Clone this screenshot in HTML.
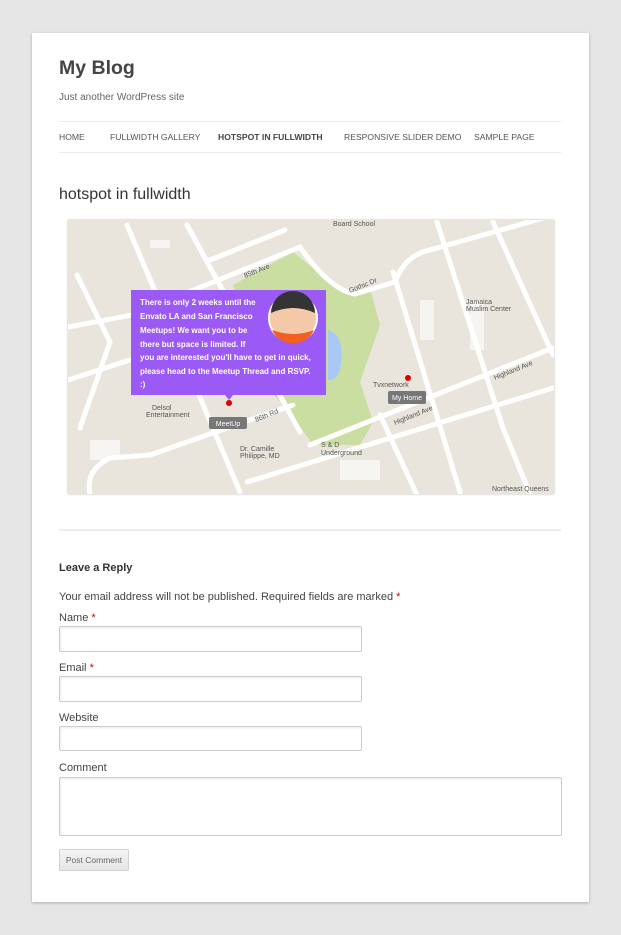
<!DOCTYPE html>
<html><head><meta charset="utf-8"><style>
*{margin:0;padding:0;box-sizing:border-box}
body{width:621px;height:935px;background:#e6e6e6;font-family:"Liberation Sans",sans-serif;color:#444;position:relative;overflow:hidden}
.page{position:absolute;left:32px;top:33px;width:557px;height:869px;background:#fff;box-shadow:0 1px 3px rgba(0,0,0,.25)}
.a{position:absolute;white-space:nowrap}
.line{position:absolute;left:59px;width:502px;height:2px;background:#ededed}
.inp{position:absolute;left:59px;width:303px;height:26px;border:1px solid #ccc;border-radius:2px;box-shadow:inset 1px 1px 2px rgba(0,0,0,.08)}
.lbl{font-size:11px;color:#444}
.r{color:#d00}
</style></head><body>
<div class="page"></div>
<div class="a" style="left:59px;top:57px;font-size:19.5px;font-weight:bold;color:#444">My Blog</div>
<div class="a" style="left:59px;top:92px;font-size:10px;color:#666">Just another WordPress site</div>
<div class="line" style="top:121px;height:1px"></div>
<div class="line" style="top:152px;height:1px"></div>
<div class="a" style="top:132px;left:59px;font-size:8.6px;color:#555">HOME</div>
<div class="a" style="top:132px;left:110px;font-size:8.6px;color:#555">FULLWIDTH GALLERY</div>
<div class="a" style="top:132px;left:218px;font-size:8.6px;color:#444;font-weight:bold">HOTSPOT IN FULLWIDTH</div>
<div class="a" style="top:132px;left:344px;font-size:8.6px;color:#555">RESPONSIVE SLIDER DEMO</div>
<div class="a" style="top:132px;left:474px;font-size:8.6px;color:#555">SAMPLE PAGE</div>
<div class="a" style="left:59px;top:186px;font-size:16px;color:#333">hotspot in fullwidth</div>

<svg class="a" style="left:68px;top:220px;box-shadow:0 0 2px rgba(0,0,0,.3)" width="486" height="274" viewBox="68 220 486 274">
<rect x="68" y="220" width="486" height="274" fill="#e9e5dc"/>
<polygon fill="#c9dea0" points="233,285 293,252 313,268 343,293 370,288 380,325 360,382 373,422 360,445 313,445 287,408 267,388"/>
<path d="M328,330 q18,5 12,40 q-5,12 -12,10z" fill="#a9c8f5"/>
<g stroke="#fff" stroke-width="5" fill="none" stroke-linecap="round">
<path d="M68,327 L132,315 L300,247"/>
<path d="M300,247 Q330,290 355,294 L395,282 Q405,255 430,250 L554,215"/>
<path d="M310,445 L553,348"/>
<path d="M150,455 L293,405"/>
<path d="M247,482 L553,388"/>
<path d="M393,272 L460,492"/>
<path d="M437,222 L503,428 L530,494"/>
<path d="M380,415 L417,495"/>
<path d="M493,222 L553,355"/>
<path d="M77,275 L110,342 L80,428"/>
<path d="M127,225 L240,492"/>
<path d="M187,225 L300,432"/>
<path d="M68,380 L130,360"/>
<path d="M90,494 Q85,470 110,458 L150,455"/>
<path d="M210,260 L285,230"/>
</g>
<g fill="#fff" opacity=".6">
<rect x="150" y="240" width="20" height="8"/><rect x="420" y="300" width="14" height="40"/><rect x="470" y="300" width="14" height="50"/><rect x="90" y="440" width="30" height="20"/><rect x="340" y="460" width="40" height="20"/>
</g>
<g font-family="Liberation Sans,sans-serif" font-size="7" fill="#555">
<text x="333" y="226">Board School</text>
<text x="466" y="304">Jamaica</text><text x="466" y="311">Muslim Center</text>
<text x="373" y="387">Tvxnetwork</text>
<text x="152" y="410">Delsol</text><text x="146" y="417">Entertainment</text>
<text x="240" y="451">Dr. Camille</text><text x="240" y="458">Philippe, MD</text>
<text x="321" y="447">S &amp; D</text><text x="321" y="455">Underground</text>
<text x="492" y="491">Northeast Queens</text>
<text x="245" y="278" transform="rotate(-22 245 278)">85th Ave</text>
<text x="350" y="293" transform="rotate(-22 350 293)">Gothic Dr</text>
<text x="495" y="380" transform="rotate(-22 495 380)">Highland Ave</text>
<text x="395" y="425" transform="rotate(-22 395 425)">Highland Ave</text>
<text x="256" y="422" transform="rotate(-22 256 422)">86th Rd</text>
</g>
<circle cx="229" cy="403" r="3" fill="#d00"/><circle cx="408" cy="378" r="3" fill="#d00"/>
<rect x="209" y="417" width="38" height="12" rx="2" fill="#777"/>
<text x="228" y="426" font-family="Liberation Sans,sans-serif" font-size="7" fill="#fff" text-anchor="middle">MeetUp</text>
<rect x="388" y="391" width="38" height="13" rx="2" fill="#777"/>
<text x="407" y="400" font-family="Liberation Sans,sans-serif" font-size="7" fill="#fff" text-anchor="middle">My Home</text>
<path d="M131,290 h195 v105 h-93 l-4,5 l-4,-5 h-94z" fill="#9b59f5"/>
<circle cx="293" cy="318" r="25" fill="#fff"/>
<circle cx="293" cy="318" r="23" fill="#f3c9a8"/>
<path d="M272,330 a23,23 0 0 0 42,0 q-20,8 -42,0z" fill="#f06020"/>
<path d="M271,313 a22,22 0 0 1 44,0 q-22,-10 -44,0z" fill="#333"/>
<g font-family="Liberation Sans,sans-serif" font-size="8" font-weight="bold" fill="#fff">
<text x="140" y="305">There is only 2 weeks until the</text>
<text x="140" y="319">Envato LA and San Francisco</text>
<text x="140" y="333">Meetups! We want you to be</text>
<text x="140" y="347">there but space is limited. If</text>
<text x="140" y="360">you are interested you'll have to get in quick,</text>
<text x="140" y="374">please head to the Meetup Thread and RSVP.</text>
<text x="140" y="387">:)</text>
</g>
</svg>

<div class="line" style="top:529px"></div>
<div class="a" style="left:59px;top:562px;font-size:11px;font-weight:bold;color:#333">Leave a Reply</div>
<div class="a lbl" style="left:59px;top:591px">Your email address will not be published. Required fields are marked <span class="r">*</span></div>
<div class="a lbl" style="left:59px;top:612px">Name <span class="r">*</span></div>
<div class="inp" style="top:626px"></div>
<div class="a lbl" style="left:59px;top:662px">Email <span class="r">*</span></div>
<div class="inp" style="top:676px"></div>
<div class="a lbl" style="left:59px;top:712px">Website</div>
<div class="inp" style="top:726px;height:25px"></div>
<div class="a lbl" style="left:59px;top:762px">Comment</div>
<div class="inp" style="top:777px;width:503px;height:59px"></div>
<div class="a" style="left:59px;top:849px;width:70px;height:22px;border:1px solid #d2d2d2;border-radius:2px;background:linear-gradient(#f4f4f4,#e6e6e6);font-size:8.5px;color:#666;text-align:center;line-height:20px">Post Comment</div>
</body></html>
